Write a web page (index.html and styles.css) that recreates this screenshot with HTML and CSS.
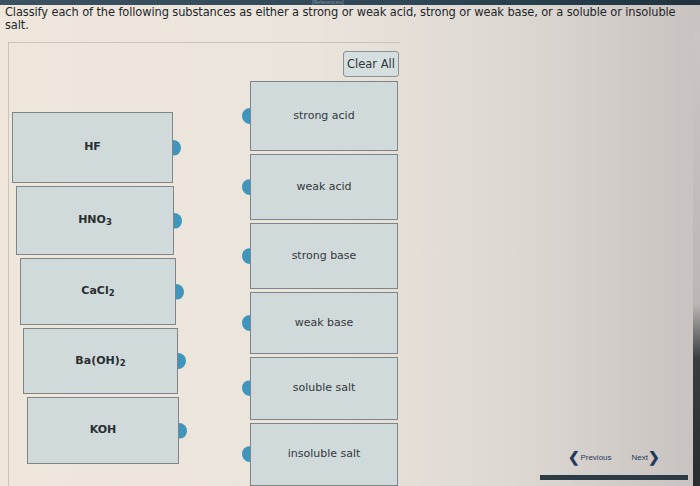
FILE: index.html
```html
<!DOCTYPE html>
<html>
<head>
<meta charset="utf-8">
<link rel="stylesheet" href="styles.css">
</head>
<body>
<div class="topbar"><span class="ref">[References]</span></div>
<p class="prompt">Classify each of the following substances as either a strong or weak acid, strong or weak base, or a soluble or insoluble salt.</p>
<div class="main">
  <div class="workspace">
    <div class="left">
      <div class="item i1">HF</div>
      <div class="item i2"><span>HNO<sub>3</sub></span></div>
      <div class="item i3"><span>CaCl<sub>2</sub></span></div>
      <div class="item i4"><span>Ba(OH)<sub>2</sub></span></div>
      <div class="item i5">KOH</div>
    </div>
    <div class="right">
      <button class="clear">Clear All</button>
      <div class="target t1">strong acid</div>
      <div class="target t2">weak acid</div>
      <div class="target t3">strong base</div>
      <div class="target t4">weak base</div>
      <div class="target t5">soluble salt</div>
      <div class="target t6">insoluble salt</div>
    </div>
  </div>
  <div class="side">
    <div class="nav">
      <span class="prev"><span class="chev">&#10094;</span>Previous</span>
      <span class="next">Next<span class="chev">&#10095;</span></span>
    </div>
    <div class="bottombar"></div>
  </div>
  <div class="edge"></div>
</div>
</body>
</html>
```

FILE: styles.css
```css
html, body {
  margin: 0;
  height: 486px;
  overflow: hidden;
}
body {
  background: linear-gradient(90deg, #efe7dc 0%, #ebe4dc 45%, #ddd7d2 75%, #c8c2c0 100%);
  font-family: "DejaVu Sans", Verdana, sans-serif;
  color: #2f3336;
}
.topbar {
  height: 5px;
  background: linear-gradient(90deg, #3a5261 0%, #2e4655 60%, #1f3340 100%);
  overflow: hidden;
  display: flex;
  align-items: center;
  padding-left: 312px;
}
.ref {
  font-size: 5px;
  line-height: 5px;
  color: #8ea3b3;
}
.prompt {
  margin: 0;
  padding: 0 2px 0 5px;
  font-size: 12.7px;
  line-height: 13px;
  letter-spacing: -0.1px;
  font-stretch: condensed;
  font-family: "DejaVu Sans Condensed", "DejaVu Sans", sans-serif;
  color: #23272a;
}
.main {
  display: flex;
  height: 455px;
}
.workspace {
  margin: 11px 0 0 8px;
  width: 392px;
  border-top: 1px solid #cbc4bc;
  border-left: 1px solid #cbc4bc;
  display: flex;
  justify-content: space-between;
  padding: 8px 2px 0 3px;
  box-sizing: border-box;
}
.left {
  padding-top: 61px;
  display: flex;
  flex-direction: column;
  gap: 3px;
}
.item, .target {
  position: relative;
  box-sizing: border-box;
  background: #d0dada;
  border: 1px solid #7f8588;
  display: flex;
  align-items: center;
  justify-content: center;
  font-size: 11px;
}
.item {
  font-weight: bold;
  color: #2a2e33;
  width: 160px;
  padding-bottom: 2px;
}
.item sub {
  font-size: 8.5px;
  position: relative;
  top: 2px;
  vertical-align: baseline;
  line-height: 0;
}
.i1 { height: 71px; margin-left: 0; width: 161px; }
.i2 { height: 69px; margin-left: 4px; width: 158px; }
.i3 { height: 67px; margin-left: 8px; width: 156px; }
.i4 { height: 66px; margin-left: 11px; width: 155px; }
.i5 { height: 67px; margin-left: 15px; width: 152px; }
.item::after {
  content: "";
  position: absolute;
  right: -9px;
  top: 50%;
  width: 16px;
  height: 16px;
  margin-top: -8px;
  border-radius: 50%;
  background: #3f95bb;
  clip-path: inset(0 0 0 50%);
}
.right {
  width: 148px;
  display: flex;
  flex-direction: column;
  align-items: flex-end;
  gap: 3px;
}
.clear {
  width: 56px;
  height: 26px;
  padding: 0;
  margin-right: -1px;
  font-family: "DejaVu Sans", sans-serif;
  font-size: 11.5px;
  color: #30353a;
  background: #d6dfe0;
  border: 1px solid #8b9194;
  border-radius: 3px;
  margin-bottom: 1px;
}
.target {
  width: 148px;
  font-size: 11px;
  color: #33383c;
  padding-bottom: 1px;
}
.t1 { height: 71px; }
.t2 { height: 67px; }
.t3 { height: 66px; }
.t4 { height: 63px; }
.t5 { height: 63px; }
.t6 { height: 64px; }
.target::before {
  content: "";
  position: absolute;
  left: -9px;
  top: 50%;
  width: 16px;
  height: 16px;
  margin-top: -8px;
  border-radius: 50%;
  background: #3f95bb;
  clip-path: inset(0 50% 0 0);
}
.side {
  flex: 1;
  display: flex;
  flex-direction: column;
  justify-content: flex-end;
  align-items: flex-end;
  padding-right: 5px;
}
.nav {
  display: flex;
  gap: 20px;
  align-items: center;
  margin-right: 28px;
  font-family: "Liberation Sans", Arial, sans-serif;
  font-size: 8px;
  color: #243a55;
}
.chev {
  font-size: 14px;
  font-weight: bold;
  color: #1f3a5f;
  vertical-align: -2px;
}
.bottombar {
  margin-top: 10px;
  width: 148px;
  height: 5px;
  background: #2c3c47;
  margin-bottom: 6px;
}
.edge {
  width: 7px;
  background: linear-gradient(180deg, #cbc6c3 0%, #bcb6b4 60%, #3a3d40 72%, #2b2e31 100%);
}
```
